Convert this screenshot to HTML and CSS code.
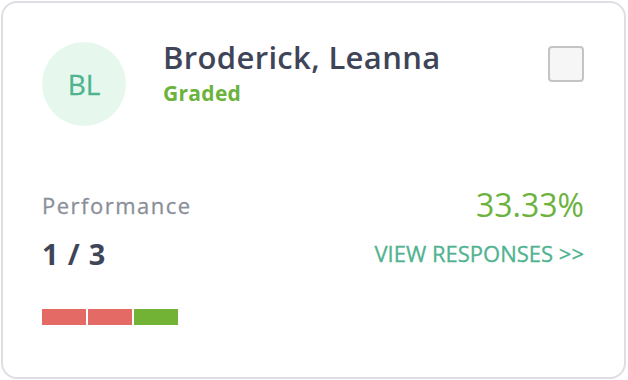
FILE: index.html
```html
<!DOCTYPE html>
<html lang="en">
<head>
<meta charset="utf-8">
<title>Student card</title>
<link rel="stylesheet" href="styles.css">
</head>
<body>
<div class="card">
  <div class="header">
    <div class="avatar">BL</div>
    <div class="who">
      <div class="name">Broderick, Leanna</div>
      <div class="status">Graded</div>
    </div>
    <div class="check"></div>
  </div>
  <div class="stats">
    <div class="left">
      <div class="label">Performance</div>
      <div class="score">1 / 3</div>
      <div class="bars">
        <span class="bar wrong"></span>
        <span class="bar wrong"></span>
        <span class="bar right"></span>
      </div>
    </div>
    <div class="rightcol">
      <div class="pct">33.33%</div>
      <div class="link">VIEW RESPONSES &gt;&gt;</div>
    </div>
  </div>
</div>
</body>
</html>
```
FILE: styles.css
```css
html, body {
  margin: 0;
  padding: 0;
  background: #ffffff;
}
body {
  padding: 1px;
  font-family: "Open Sans", "Noto Sans", sans-serif;
}
.card {
  box-sizing: border-box;
  width: 625px;
  height: 378px;
  border: 2px solid #dedee4;
  border-radius: 16px;
  padding: 39px 40px 0 39px;
  background: #fff;
}
.header {
  display: flex;
  align-items: flex-start;
}
.avatar {
  width: 84px;
  height: 84px;
  border-radius: 50%;
  background: #e6f8ee;
  color: #4fb38f;
  font-size: 28px;
  -webkit-text-stroke: 0.3px #4fb38f;
  display: flex;
  align-items: center;
  justify-content: center;
  flex: none;
}
.who {
  flex: 1;
  margin-left: 37px;
}
.name {
  font-size: 31px;
  line-height: 30px;
  font-weight: 600;
  letter-spacing: 0.35px;
  color: #3e4558;
}
.status {
  margin-top: 7px;
  font-size: 21px;
  line-height: 28px;
  font-weight: 700;
  letter-spacing: 0.3px;
  color: #6cb33e;
}
.check {
  flex: none;
  box-sizing: border-box;
  width: 36px;
  height: 36px;
  margin-top: 4px;
  border: 2px solid #c4c4c4;
  border-radius: 4px;
  background: #f6f6f6;
}
.stats {
  margin-top: 59px;
  display: flex;
  justify-content: space-between;
  align-items: flex-start;
}
.left {
  padding-top: 6px;
}
.label {
  font-size: 22px;
  line-height: 28px;
  letter-spacing: 1.5px;
  -webkit-text-stroke: 0.3px #8a8f99;
  color: #8a8f99;
}
.score {
  margin-top: 17px;
  font-size: 29px;
  line-height: 36px;
  font-weight: 700;
  letter-spacing: 0.8px;
  color: #3e4558;
}
.bars {
  display: flex;
  gap: 2px;
  margin-top: 37px;
}
.bar {
  width: 44px;
  height: 16px;
}
.bar.wrong { background: #e36a65; }
.bar.right { background: #72b336; }
.rightcol {
  text-align: right;
}
.pct {
  font-size: 32px;
  line-height: 40px;
  color: #6cb33e;
}
.link {
  margin-top: 14px;
  font-size: 22px;
  line-height: 28px;
  -webkit-text-stroke: 0.3px #4fb390;
  color: #4fb390;
}
```
